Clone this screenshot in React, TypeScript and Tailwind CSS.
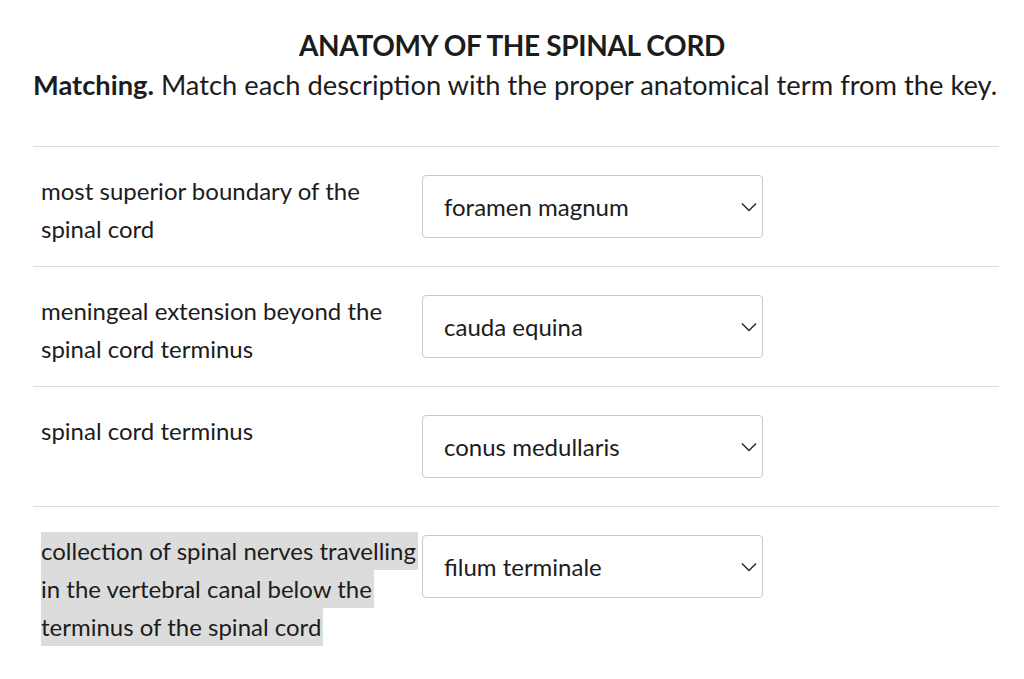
import React from "react";

const rows: { lines: string[]; value: string; highlight?: boolean }[] = [
  { lines: ["most superior boundary of the", "spinal cord"], value: "foramen magnum" },
  { lines: ["meningeal extension beyond the", "spinal cord terminus"], value: "cauda equina" },
  { lines: ["spinal cord terminus"], value: "conus medullaris" },
  {
    lines: ["collection of spinal nerves travelling", "in the vertebral canal below the", "terminus of the spinal cord"],
    value: "filum terminale",
    highlight: true,
  },
];

function Chevron() {
  return (
    <svg width="16" height="10" viewBox="0 0 16 10" className="shrink-0">
      <polyline points="1,1.5 8,8.5 15,1.5" fill="none" stroke="#2a2a2a" strokeWidth="1.5" />
    </svg>
  );
}

export default function App() {
  return (
    <div
      className="w-[1024px] h-[679px] bg-white text-[#1c1c1c] overflow-hidden"
      style={{ fontFamily: "Lato, 'Open Sans', sans-serif" }}
    >
      <div className="pt-[28px] text-center font-bold text-[28px] leading-[34px] tracking-[-0.35px]">
        ANATOMY OF THE SPINAL CORD
      </div>
      <div className="mt-[6px] pl-[33px] text-[27.3px] leading-[34px] whitespace-nowrap">
        <span className="font-bold">Matching.</span> Match each description with the proper anatomical term from the key.
      </div>
      <div className="mx-[33px] mt-[44px] border-t border-[#dcdcdc] w-[966px]">
        {rows.map((r, i) => (
          <div
            key={i}
            className={`flex items-start pl-[8px] pt-[25px] h-[120px] ${i < rows.length - 1 ? "border-b border-[#dcdcdc]" : ""}`}
          >
            <div className="w-[381px] text-[24px] leading-[38px] whitespace-nowrap">
              {r.lines.map((l, j) => (
                <div key={j} className={r.highlight ? "w-fit bg-[#dcdcdc] pr-[2px]" : ""}>
                  {l}
                </div>
              ))}
            </div>
            <div className="mt-[3px] w-[341px] h-[63px] border border-[#c8c8c8] rounded-[4px] flex items-center justify-between pl-[21px] pr-[5px] text-[24px]">
              <span>{r.value}</span>
              <Chevron />
            </div>
          </div>
        ))}
      </div>
    </div>
  );
}
